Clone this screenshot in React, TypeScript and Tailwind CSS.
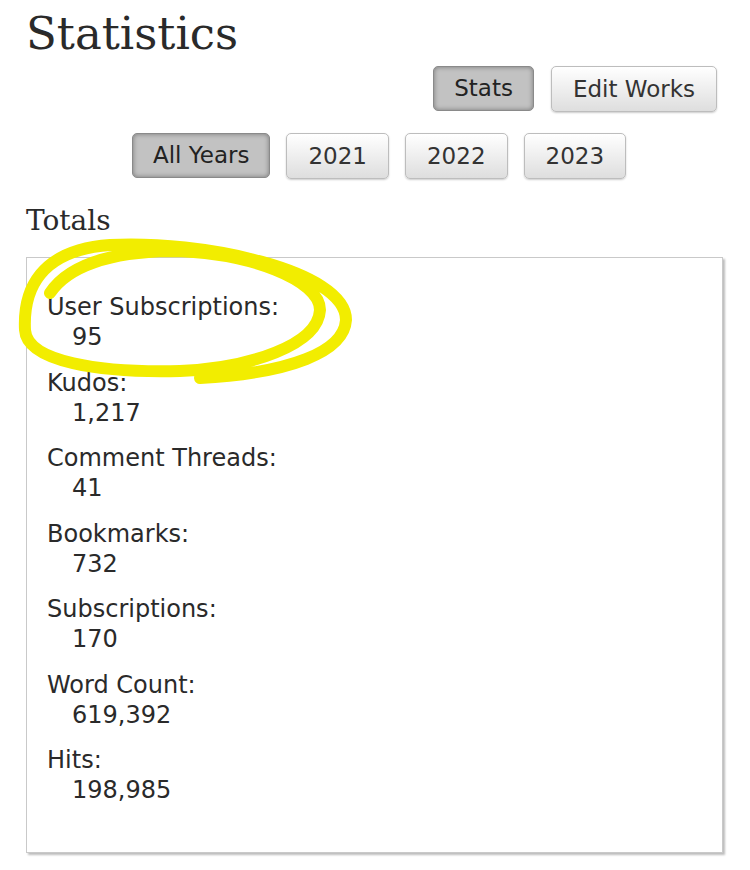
import React from "react";

const stats = [
  { label: "User Subscriptions:", value: "95" },
  { label: "Kudos:", value: "1,217" },
  { label: "Comment Threads:", value: "41" },
  { label: "Bookmarks:", value: "732" },
  { label: "Subscriptions:", value: "170" },
  { label: "Word Count:", value: "619,392" },
  { label: "Hits:", value: "198,985" },
];

const Btn = ({ label, active }: { label: string; active?: boolean }) => (
  <span
    className={
      active
        ? "h-[45px] px-[20px] flex items-center rounded-[5px] border border-[#8a8a8a] bg-[#c2c2c2] shadow-[inset_0_0_5px_#777] text-[23px] text-[#222]"
        : "h-[46px] px-[21px] flex items-center rounded-[5px] border border-[#bdbdbd] bg-gradient-to-b from-white to-[#dedede] shadow-[0_1px_2px_#ccc] text-[23px] text-[#333]"
    }
  >
    {label}
  </span>
);

export default function App() {
  return (
    <div className="relative w-[750px] h-[870px] bg-white overflow-hidden text-[#2a2a2a] font-['DejaVu_Sans',Verdana,sans-serif]">
      <h1 className="pl-[26px] pt-[6px] h-[66px] text-[45px] leading-[56px] font-['DejaVu_Serif',Georgia,serif] text-[#2a2a2a]">
        Statistics
      </h1>

      <div className="flex justify-end gap-[17px] pr-[33px]">
        <Btn label="Stats" active />
        <Btn label="Edit Works" />
      </div>

      <div className="flex justify-center gap-[16px] pl-[8px] mt-[21px]">
        <Btn label="All Years" active />
        <Btn label="2021" />
        <Btn label="2022" />
        <Btn label="2023" />
      </div>

      <h2 className="pl-[26px] mt-[22px] text-[28px] leading-[40px] font-['DejaVu_Serif',Georgia,serif]">
        Totals
      </h2>

      <div className="ml-[26px] mt-[16px] w-[697px] h-[596px] border border-[#c9c9c9] shadow-[2px_2px_2px_#bdbdbd] pl-[20px] pt-[34px]">
        <dl className="flex flex-col gap-[15.5px] text-[24px] leading-[30px]">
          {stats.map((s) => (
            <div key={s.label}>
              <dt>{s.label}</dt>
              <dd className="pl-[25px]">{s.value}</dd>
            </div>
          ))}
        </dl>
      </div>

      {/* highlighter scribble */}
      <svg className="absolute left-0 top-0 pointer-events-none" width="750" height="870" viewBox="0 0 750 870">
        <path
          d="M 50 293 C 68 266, 110 252, 170 251 C 250 252, 320 280, 320 310 C 318 345, 250 368, 180 371 C 100 373, 27 362, 25 330 C 23 290, 40 250, 110 245 C 200 240, 346 270, 346 320 C 344 352, 290 373, 200 378"
          fill="none"
          stroke="#f2ed00"
          strokeWidth="12"
          strokeLinecap="round"
          strokeLinejoin="round"
        />
      </svg>
    </div>
  );
}
